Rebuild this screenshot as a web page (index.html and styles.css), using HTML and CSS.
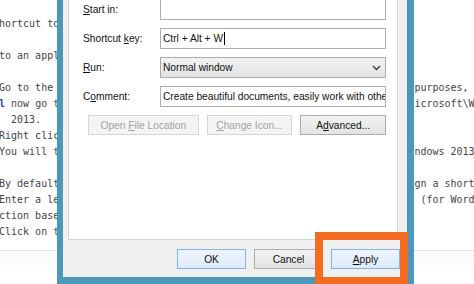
FILE: index.html
```html
<!DOCTYPE html>
<html lang="en">
<head>
    <meta charset="UTF-8">
    <meta name="viewport" content="width=device-width, initial-scale=1.0">
    <title>Shortcut key for Word 2013</title>
    <link rel="stylesheet" href="styles.css">
</head>
<body>

    <!-- article text behind the dialog -->
    <pre class="article">

<span class="cut">hortcut to open Word from anywhere, with one keystroke.</span>

<span class="cut">to an application, you need its shortcut icon first.</span>

<span class="cut">Go to the Start screen and look for Word 2013. For demonstration</span>purposes, I use Word.
<span class="cut"><span class="link">l</span> now go to the folder where the Start menu items live: C:\ProgramData\M</span>icrosoft\Windows\Start Menu
<span class="cut">  2013.</span>
<span class="cut">Right click on the Word 2013 icon and choose Properties from the menu.</span>
<span class="cut">You will then see the Properties dialog box of the shortcut for Wi</span>ndows 2013<span class="mark">-</span>

<span class="cut">By default the Shortcut key field says None. Click in it to assi</span>gn a shortcut key
<span class="cut">Enter a letter, for example W, and Windows adds Ctrl + Alt to it</span> (for Word).
<span class="cut">ction based shortcuts are easy to remember this way.</span>
<span class="cut">Click on the Apply button and then on OK to close the dialog.</span>
</pre>
    <div class="article-foot"></div>

    <!-- shortcut properties dialog -->
    <div class="dialog">
        <div class="tab-page">
            <div class="field-row">
                <label>T<u>a</u>rget:</label>
                <div class="field">"C:\Program Files\Microsoft Office\Office15\WINWORD.EXE"</div>
            </div>
            <div class="field-row">
                <label><u>S</u>tart in:</label>
                <div class="field"></div>
            </div>
            <div class="field-row">
                <label>Shortcut <u>k</u>ey:</label>
                <div class="field">Ctrl + Alt + W<span class="caret"></span></div>
            </div>
            <div class="field-row">
                <label><u>R</u>un:</label>
                <div class="field select">
                    <span>Normal window</span>
                    <svg width="9" height="6" viewBox="0 0 9 6"><path d="M1 1l3.5 3.5L8 1" fill="none" stroke="#3c3c3c" stroke-width="1.4"/></svg>
                </div>
            </div>
            <div class="field-row">
                <label>C<u>o</u>mment:</label>
                <div class="field">Create beautiful documents, easily work with others, and enjoy</div>
            </div>
            <div class="action-row">
                <button class="btn wide" disabled>Open <u>F</u>ile Location</button>
                <button class="btn mid" disabled><u>C</u>hange Icon...</button>
                <button class="btn mid">A<u>d</u>vanced...</button>
            </div>
        </div>
        <div class="dialog-buttons">
            <button class="btn default">OK</button>
            <button class="btn">Cancel</button>
            <button class="btn default"><u>A</u>pply</button>
        </div>
    </div>

    <div class="highlight"></div>

</body>
</html>
```

FILE: styles.css
```css
body {
    margin: 0;
    background-color: #fff;
    overflow: hidden;
    height: 284px;
    position: relative;
}
.article {
    margin: 0 0 0 -1px;
    padding: 0;
    font-family: "DejaVu Sans Mono", "Liberation Mono", monospace;
    font-size: 10px;
    line-height: 16px;
    color: #444;
    white-space: pre;
}
.cut {
    display: inline-block;
    width: 69ch;
    overflow: hidden;
    vertical-align: top;
}
.link {
    color: #1f4f9e;
    font-weight: bold;
}
.mark {
    color: #39a6c0;
}
.article-foot {
    margin-top: 10px;
    border-top: 1px solid #e3e3e3;
    height: 20px;
    background-color: #fcfcfc;
}

/* dialog */
.dialog {
    position: absolute;
    left: 57px;
    top: -36px;
    width: 357px;
    height: 320px;
    box-sizing: border-box;
    border: solid #4b98ba;
    border-width: 0 7px 7px 6px;
    background-color: #f0f0f0;
    padding: 0 9px 0 5px;
    display: flex;
    flex-direction: column;
    font-family: "Liberation Sans", Arial, sans-serif;
    font-size: 10.2px;
    color: #111;
}
.tab-page {
    flex: 1;
    background-color: #fff;
    border: 1px solid #d5d5d5;
    padding: 5px 11px 0 14px;
    display: flex;
    flex-direction: column;
    gap: 8px;
}
.field-row {
    display: flex;
    align-items: center;
    height: 21px;
}
.field-row label {
    width: 77px;
    flex-shrink: 0;
}
.field {
    flex: 1;
    height: 21px;
    box-sizing: border-box;
    border: 1px solid #abadb3;
    background-color: #fff;
    padding: 0 2px;
    display: flex;
    align-items: center;
    white-space: nowrap;
    overflow: hidden;
}
.caret {
    display: inline-block;
    width: 1px;
    height: 13px;
    background-color: #000;
    margin-left: 1px;
}
.select {
    justify-content: space-between;
    padding-right: 4px;
    background: linear-gradient(#f2f2f2, #e4e4e4);
    border-color: #acacac;
}
.action-row {
    display: flex;
    gap: 8px;
    margin-left: 5px;
}
.btn {
    height: 20px;
    width: 69px;
    padding: 0;
    font: inherit;
    color: #111;
    background: linear-gradient(#f2f2f2, #e3e3e3);
    border: 1px solid #acacac;
    border-radius: 0;
}
.btn.wide {
    width: 111px;
}
.btn.mid {
    width: 86px;
}
.btn:disabled {
    color: #a2a2a2;
    background: #f4f4f4;
    border-color: #d6d6d6;
}
.btn.default {
    background: linear-gradient(#eef5fc, #dcebfa);
    border-color: #7eb4ea;
}
.dialog-buttons {
    display: flex;
    justify-content: flex-end;
    gap: 8px;
    padding: 9px 0 8px;
    margin-right: -2px;
}

/* orange callout round Apply */
.highlight {
    position: absolute;
    left: 315px;
    top: 232px;
    width: 93px;
    height: 53px;
    box-sizing: border-box;
    border: 8px solid #f36c21;
}
```
